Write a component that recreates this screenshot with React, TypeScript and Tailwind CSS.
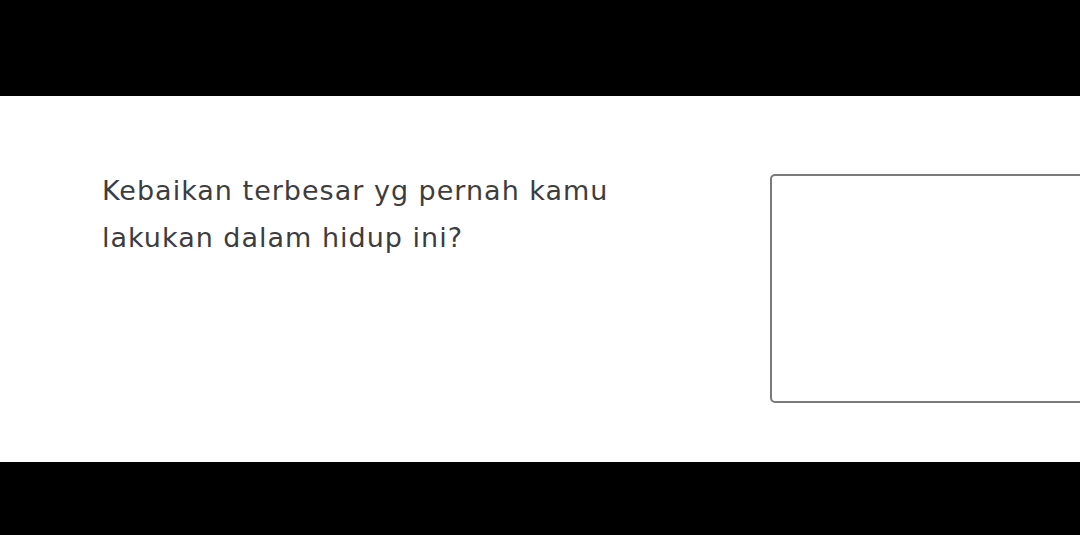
export default function App() {
  return (
    <div className="w-[1080px] h-[535px] bg-black flex flex-col overflow-hidden">
      <div className="h-[96px] shrink-0" />
      <div className="h-[366px] shrink-0 bg-white flex items-start">
        <div className="ml-[102px] mt-[71px] w-[600px] text-[27px] leading-[47px] tracking-[1px] text-[#3d3d3d] whitespace-nowrap" style={{ fontFamily: "'DejaVu Sans', sans-serif" }}>
          <div>Kebaikan terbesar yg pernah kamu</div>
          <div>lakukan dalam hidup ini?</div>
        </div>
        <div className="ml-auto mt-[78px] mr-[-20px] w-[330px] h-[229px] border-2 border-[#7a7a7a] rounded-[5px] bg-white shrink-0" />
      </div>
      <div className="flex-1" />
    </div>
  );
}
